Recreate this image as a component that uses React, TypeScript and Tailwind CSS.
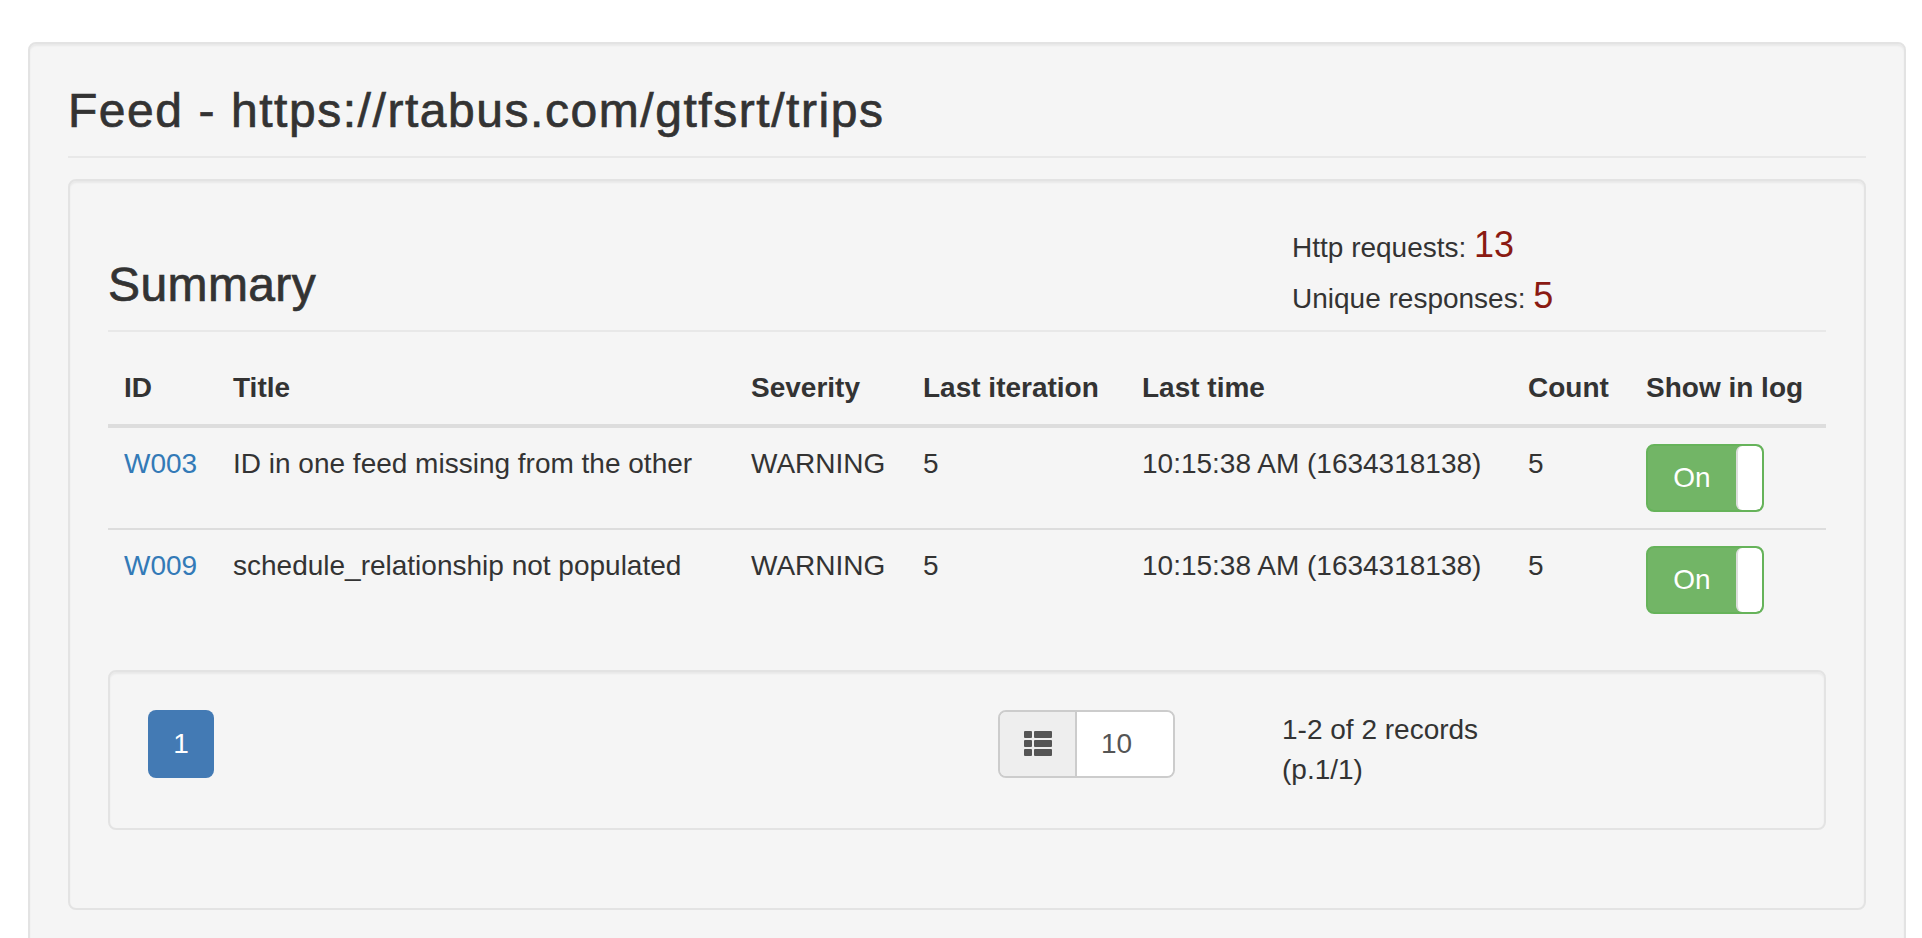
const rows = [
  { id: 'W003', title: 'ID in one feed missing from the other', severity: 'WARNING', iteration: '5', time: '10:15:38 AM (1634318138)', count: '5' },
  { id: 'W009', title: 'schedule_relationship not populated', severity: 'WARNING', iteration: '5', time: '10:15:38 AM (1634318138)', count: '5' },
];

function Toggle() {
  return (
    <div className="flex h-[68px] w-[118px] overflow-hidden rounded-[8px] border-2 border-[#66b35a] bg-[#72b566]">
      <div className="flex flex-1 items-center justify-center text-[28px] text-white">On</div>
      <div className="w-[26px] rounded-[6px] border-l-2 border-[#dedede] bg-white" />
    </div>
  );
}

function ListIcon() {
  return (
    <svg width="28" height="25" viewBox="0 0 28 25" fill="#555">
      <rect x="0" y="0" width="8" height="7" rx="1" />
      <rect x="10" y="0" width="18" height="7" rx="1" />
      <rect x="0" y="9" width="8" height="7" rx="1" />
      <rect x="10" y="9" width="18" height="7" rx="1" />
      <rect x="0" y="18" width="8" height="7" rx="1" />
      <rect x="10" y="18" width="18" height="7" rx="1" />
    </svg>
  );
}

export default function App() {
  return (
    <div className="min-h-screen overflow-hidden bg-white pt-[42px] font-['Liberation_Sans',Arial,sans-serif] text-[28px] leading-[40px] text-[#333]">
      <div className="ml-[28px] w-[1878px] rounded-[8px] border-2 border-[#e3e3e3] bg-[#f5f5f5] px-[38px] pb-[38px] pt-[41px] shadow-[inset_0_2px_2px_rgba(0,0,0,0.05)]">
        <div className="border-b-2 border-[#e8e8e8] pb-[18px]">
          <h1 className="text-[48px] leading-[1.1] tracking-[1.55px] [-webkit-text-stroke:0.7px_#333]">
            Feed - https://rtabus.com/gtfsrt/trips
          </h1>
        </div>

        <div className="mt-[21px] rounded-[8px] border-2 border-[#e3e3e3] bg-[#f5f5f5] px-[38px] pb-[38px] pt-[38px] shadow-[inset_0_2px_2px_rgba(0,0,0,0.05)]">
          <div className="flex items-start justify-between border-b-2 border-[#e8e8e8] pb-[18px]">
            <h3 className="mt-[40px] text-[48px] leading-[1.1] tracking-[0.4px] [-webkit-text-stroke:0.7px_#333]">Summary</h3>
            <div className="h-[92px] w-[534px] leading-[1.42857]">
              <div>
                Http requests: <span className="text-[36px] text-[#8a1a12]">13</span>
              </div>
              <div>
                Unique responses: <span className="text-[36px] text-[#8a1a12]">5</span>
              </div>
            </div>
          </div>

          <table className="mt-[20px] w-full table-fixed border-collapse">
            <thead>
              <tr className="border-b-4 border-[#ddd] text-left">
                <th className="w-[109px] p-[16px] font-bold">ID</th>
                <th className="w-[518px] p-[16px] font-bold">Title</th>
                <th className="w-[172px] p-[16px] font-bold">Severity</th>
                <th className="w-[219px] p-[16px] font-bold">Last iteration</th>
                <th className="w-[386px] p-[16px] font-bold">Last time</th>
                <th className="w-[118px] p-[16px] font-bold">Count</th>
                <th className="w-[196px] p-[16px] font-bold">Show in log</th>
              </tr>
            </thead>
            <tbody>
              {rows.map((r) => (
                <tr key={r.id} className="border-t-2 border-[#ddd]">
                  <td className="p-[16px] align-top">
                    <a href="#" className="text-[#337ab7]">{r.id}</a>
                  </td>
                  <td className="whitespace-nowrap p-[16px] align-top">{r.title}</td>
                  <td className="p-[16px] align-top">{r.severity}</td>
                  <td className="p-[16px] align-top">{r.iteration}</td>
                  <td className="whitespace-nowrap p-[16px] align-top">{r.time}</td>
                  <td className="p-[16px] align-top">{r.count}</td>
                  <td className="p-[16px] align-top">
                    <Toggle />
                  </td>
                </tr>
              ))}
            </tbody>
          </table>

          <div className="mb-[40px] mt-[40px] flex items-start rounded-[8px] border-2 border-[#e3e3e3] bg-[#f5f5f5] p-[38px] shadow-[inset_0_2px_2px_rgba(0,0,0,0.05)]">
            <div className="w-[850px]">
              <span className="flex h-[68px] w-[66px] items-center justify-center rounded-[8px] bg-[#437ab4] text-white">1</span>
            </div>
            <div className="flex h-[68px] w-[177px] overflow-hidden rounded-[8px] border-2 border-[#ccc]">
              <div className="flex w-[77px] items-center justify-center border-r-2 border-[#ccc] bg-[#eee]">
                <ListIcon />
              </div>
              <div className="flex flex-1 items-center bg-white px-[24px] text-[#555]">10</div>
            </div>
            <div className="ml-[107px] w-[250px]">1-2 of 2 records (p.1/1)</div>
          </div>
        </div>
      </div>
    </div>
  );
}
